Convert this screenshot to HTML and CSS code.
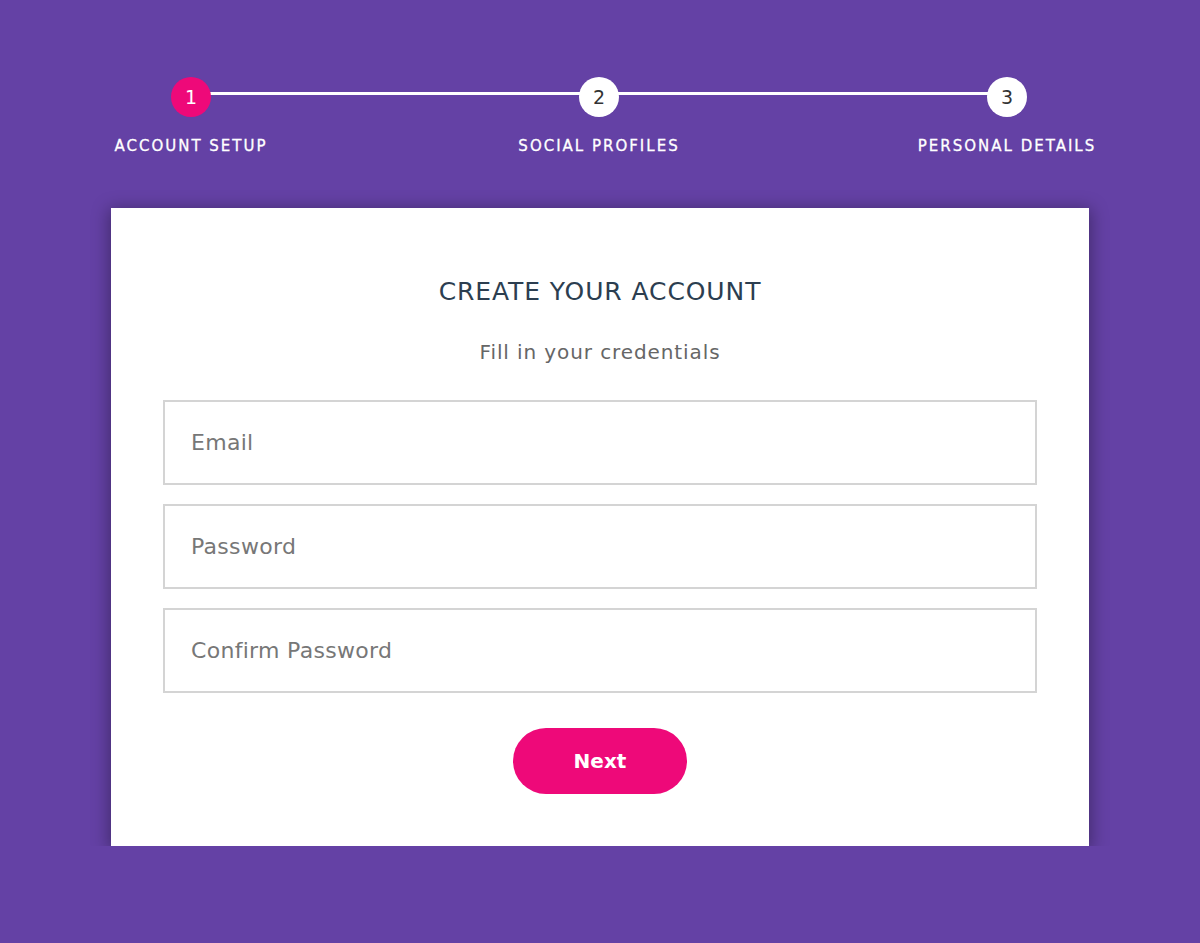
FILE: index.html
```html
<!DOCTYPE html>
<html lang="en">
<head>
    <meta charset="UTF-8">
    <meta name="viewport" content="width=device-width, initial-scale=1.0">
    <title>Create your account</title>
    <link rel="stylesheet" href="styles.css">
</head>
<body>

    <div class="page">
        <!-- Progress steps -->
        <ul class="steps">
            <li class="step active"><span class="dot">1</span><span class="label">Account Setup</span></li>
            <li class="step"><span class="dot">2</span><span class="label">Social Profiles</span></li>
            <li class="step"><span class="dot">3</span><span class="label">Personal Details</span></li>
        </ul>

        <!-- Step 1 form -->
        <form class="card">
            <h2 class="card-title">Create your account</h2>
            <h3 class="card-sub">Fill in your credentials</h3>
            <input class="field" type="text" placeholder="Email">
            <input class="field" type="password" placeholder="Password">
            <input class="field" type="password" placeholder="Confirm Password">
            <button class="next" type="button">Next</button>
        </form>
    </div>

</body>
</html>
```

FILE: styles.css
```css
/* --- Page --- */
body {
    margin: 0; padding: 0;
    background: #6441a5;
    font-family: "DejaVu Sans", "Noto Sans", sans-serif;
}

.page {
    width: 978px;
    margin: 0 auto;
    padding-top: 77px;
}

/* --- Progress steps --- */
.steps {
    position: relative;
    display: flex; justify-content: space-between;
    list-style: none;
    margin: 0 2px 0 0; padding: 0;
}
.steps::before {
    content: "";
    position: absolute;
    top: 15px; left: 80px; right: 80px;
    height: 3px;
    background: #fff;
}
.step {
    position: relative;
    z-index: 1;
    width: 160px;
    display: flex; flex-direction: column; align-items: center;
}
.step .dot {
    width: 40px; height: 40px;
    border-radius: 50%;
    background: #fff;
    color: #333;
    font-size: 19px;
    line-height: 40px;
    text-align: center;
}
.step.active .dot {
    background: #ee0979;
    color: #fff;
}
.step .label {
    margin-top: 19px;
    color: #fff;
    font-size: 15px;
    line-height: 20px;
    letter-spacing: 2px;
    text-transform: uppercase;
    white-space: nowrap;
    -webkit-text-stroke: 0.3px #fff;
}

/* --- Card --- */
.card {
    margin-top: 52px;
    background: #fff;
    box-shadow: 0 3px 16px 2px rgba(0, 0, 0, 0.35);
    padding: 69px 52px 52px;
    display: flex; flex-direction: column; align-items: center;
}
.card-title {
    margin: 0;
    font-size: 25px; font-weight: normal;
    line-height: 30px;
    letter-spacing: 0.9px;
    color: #2c3e50;
    text-transform: uppercase;
}
.card-sub {
    margin: 32px 0 35px;
    font-size: 20px; font-weight: normal;
    line-height: 26px;
    letter-spacing: 0.9px;
    color: #666;
}
.field {
    box-sizing: border-box;
    width: 100%; height: 85px;
    margin: 0 0 19px;
    padding: 0 26px;
    border: 2px solid #d4d4d4;
    border-radius: 0;
    font-family: inherit;
    font-size: 22px;
    letter-spacing: 0.3px;
    color: #2c3e50;
    outline: none;
}
.field::placeholder { color: #777; }
.field:last-of-type { margin-bottom: 35px; }

.next {
    width: 174px; height: 66px;
    border: none;
    border-radius: 33px;
    background: #ee0979;
    color: #fff;
    font-family: inherit;
    font-size: 20px; font-weight: bold;
    cursor: pointer;
}
```
